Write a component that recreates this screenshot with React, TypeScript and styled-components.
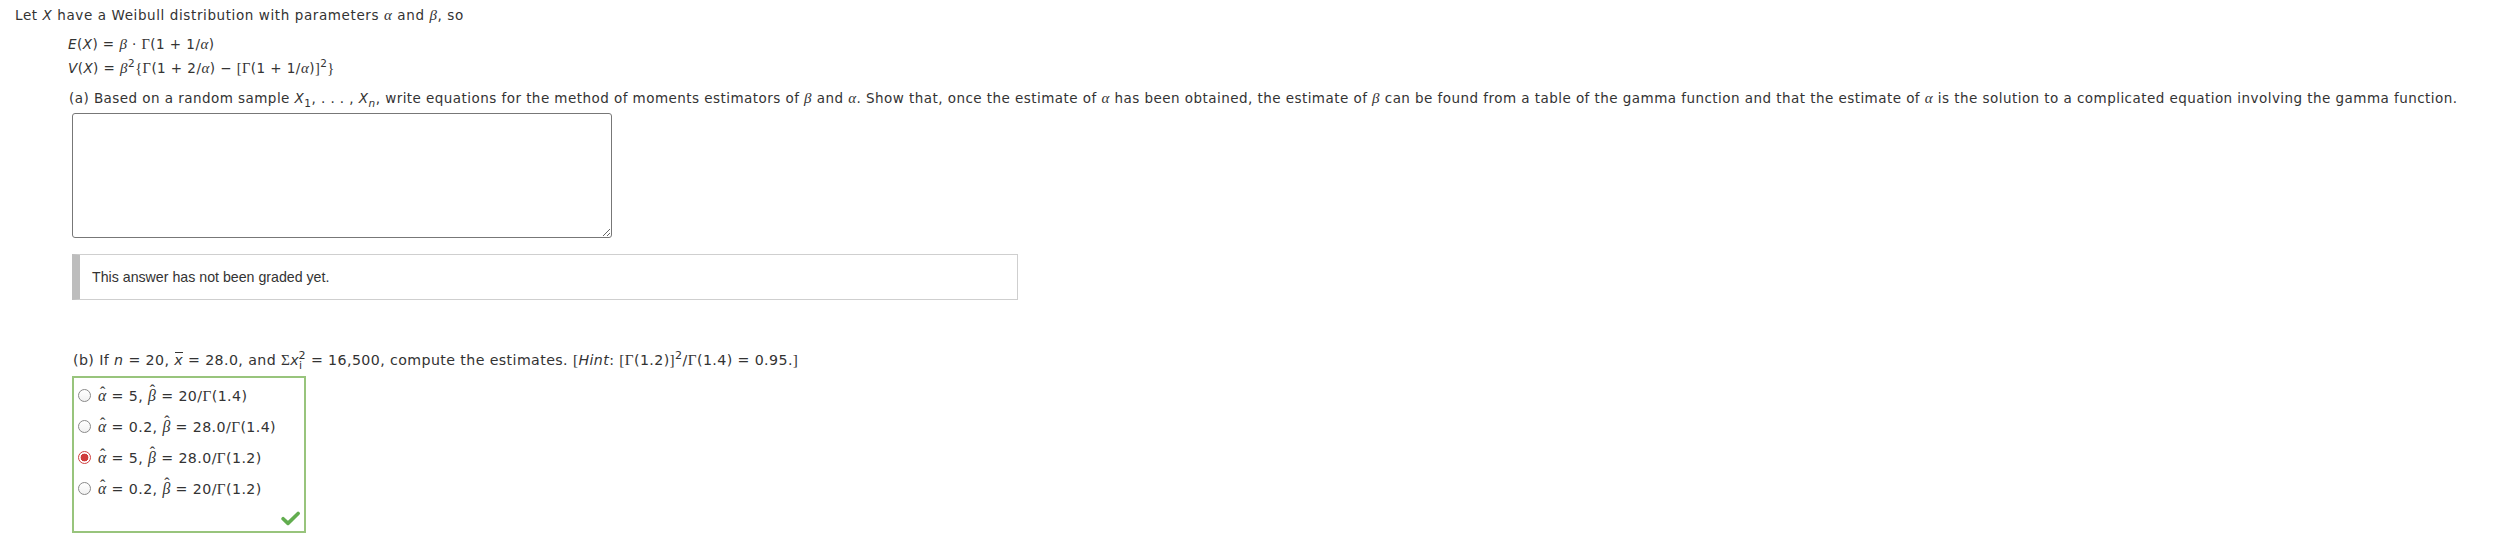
import React from 'react';
import styled, { createGlobalStyle } from 'styled-components';

const GlobalStyle = createGlobalStyle`
  html, body {
    margin: 0;
    padding: 0;
    background: #fff;
  }
  body {
    font-family: "DejaVu Sans", Verdana, sans-serif;
    font-size: 13.5px;
    letter-spacing: 0.45px;
    color: #333;
  }
`;

const Page = styled.div`
  padding: 5px 0 40px 15px;
  white-space: nowrap;
`;

const Intro = styled.div`
  line-height: 20px;
  letter-spacing: 0.6px;
`;

const Formulas = styled.div`
  margin: 7px 0 0 53px;
  line-height: 24px;
`;

const PartText = styled.div<{ $top: number; $indent: number }>`
  margin-top: ${p => p.$top}px;
  margin-left: ${p => p.$indent}px;
  line-height: 20px;
`;

const PartB = styled.div`
  font-size: 14.2px;
  letter-spacing: 0.4px;
`;

const Var = styled.i`
  font-style: italic;
`;

const Sym = styled.span`
  font-family: "Liberation Serif", "Times New Roman", serif;
  font-size: 1.074em;
  line-height: 1;
`;

const Greek = styled(Sym)`
  font-size: 1.111em;
  font-style: italic;
`;

const Sub = styled.span`
  position: relative;
  top: 4px;
  font-size: 0.78em;
  line-height: 0;
`;

const Sup = styled.span`
  position: relative;
  top: -6px;
  font-size: 0.78em;
  line-height: 0;
`;

const StackedSub = styled(Sub)`
  margin-right: -4px;
`;

const Bar = styled.span`
  position: relative;
  display: inline-block;
  &::before {
    content: '';
    position: absolute;
    left: 1px;
    right: 0;
    top: 2px;
    border-top: 1px solid #333;
  }
`;

const Hat = styled.span<{ $top: number }>`
  position: relative;
  display: inline-block;
  line-height: 1;
  &::after {
    content: 'ˆ';
    position: absolute;
    left: 1px;
    right: 0;
    top: ${p => p.$top}px;
    text-align: center;
    font-family: "Liberation Serif", "Times New Roman", serif;
    font-style: normal;
    font-size: 16px;
    line-height: 1;
  }
`;

const AnswerBox = styled.textarea`
  display: block;
  box-sizing: border-box;
  margin: 5px 0 0 57px;
  width: 540px;
  height: 125px;
  border: 1px solid #777;
  border-radius: 3px;
  padding: 4px;
  font-family: "DejaVu Sans", Verdana, sans-serif;
  font-size: 13px;
  background: #fff;
  resize: both;
  outline: none;
`;

const GradeNote = styled.div`
  box-sizing: border-box;
  margin: 16px 0 0 57px;
  width: 946px;
  height: 46px;
  border: 1px solid #cfcfcf;
  border-left: 8px solid #bdbdbd;
  display: flex;
  align-items: center;
  padding-left: 12px;
  font-family: "Liberation Sans", Arial, sans-serif;
  font-size: 14.2px;
  letter-spacing: 0;
  color: #333;
`;

const Choices = styled.div`
  box-sizing: border-box;
  margin: 6px 0 0 57px;
  width: 234px;
  height: 157px;
  border: 2px solid #98c47c;
  padding: 2px 0 0 3px;
  display: flex;
  flex-direction: column;
`;

const Choice = styled.label`
  display: flex;
  align-items: center;
  gap: 7px;
  height: 31px;
`;

const Radio = styled.span<{ $checked?: boolean }>`
  box-sizing: border-box;
  flex: none;
  width: 13px;
  height: 13px;
  border-radius: 50%;
  border: 1px solid ${p => (p.$checked ? '#d04040' : '#8a8a8a')};
  background: ${p =>
    p.$checked
      ? 'radial-gradient(circle, #d03c3c 0 3.6px, #fff 4.2px)'
      : 'linear-gradient(#fff, #f1f1f1)'};
  margin-left: 1px;
`;

const CheckRow = styled.div`
  flex: 1;
  display: flex;
  justify-content: flex-end;
  align-items: flex-end;
  padding: 0 4px 5px 0;
`;

const alphaHat = (
  <Hat $top={-3}>
    <Greek>α</Greek>
  </Hat>
);

const betaHat = (
  <Hat $top={-5}>
    <Greek>β</Greek>
  </Hat>
);

const G = <Sym>Γ</Sym>;

const options = [
  { a: '5', b: '20', g: '1.4' },
  { a: '0.2', b: '28.0', g: '1.4' },
  { a: '5', b: '28.0', g: '1.2', checked: true },
  { a: '0.2', b: '20', g: '1.2' },
];

const App: React.FC = () => {
  return (
    <Page>
      <GlobalStyle />
      <Intro>
        Let <Var>X</Var> have a Weibull distribution with parameters <Greek>α</Greek> and{' '}
        <Greek>β</Greek>, so
      </Intro>
      <Formulas>
        <div>
          <Var>E</Var>(<Var>X</Var>) = <Greek>β</Greek> · {G}(1 + 1/<Greek>α</Greek>)
        </div>
        <div>
          <Var>V</Var>(<Var>X</Var>) = <Greek>β</Greek>
          <Sup>2</Sup>
          <Sym>{'{'}</Sym>
          {G}(1 + 2/<Greek>α</Greek>) − <Sym>[</Sym>
          {G}(1 + 1/<Greek>α</Greek>)<Sym>]</Sym>
          <Sup>2</Sup>
          <Sym>{'}'}</Sym>
        </div>
      </Formulas>
      <PartText $top={8} $indent={54}>
        (a) Based on a random sample <Var>X</Var>
        <Sub>1</Sub>, . . . , <Var>X</Var>
        <Sub>
          <Var>n</Var>
        </Sub>
        , write equations for the method of moments estimators of <Greek>β</Greek> and{' '}
        <Greek>α</Greek>. Show that, once the estimate of <Greek>α</Greek> has been obtained, the
        estimate of <Greek>β</Greek> can be found from a table of the gamma function and that the
        estimate of <Greek>α</Greek> is the solution to a complicated equation involving the gamma
        function.
      </PartText>
      <AnswerBox />
      <GradeNote>This answer has not been graded yet.</GradeNote>
      <PartB>
        <PartText $top={50} $indent={58}>
          (b) If <Var>n</Var> = 20, <Bar>
            <Var>x</Var>
          </Bar>{' '}
          = 28.0, and <Sym>Σ</Sym>
          <Var>x</Var>
          <StackedSub>i</StackedSub>
          <Sup>2</Sup> = 16,500, compute the estimates. <Sym>[</Sym>
          <Var>Hint</Var>: <Sym>[</Sym>
          {G}(1.2)<Sym>]</Sym>
          <Sup>2</Sup>/{G}(1.4) = 0.95.<Sym>]</Sym>
        </PartText>
        <Choices>
          {options.map(o => (
            <Choice key={o.a + o.b + o.g}>
              <Radio $checked={o.checked} />
              <span>
                {alphaHat} = {o.a}, {betaHat} = {o.b}/{G}({o.g})
              </span>
            </Choice>
          ))}
          <CheckRow>
            <svg width="19" height="15" viewBox="0 0 18 14">
              <path
                d="M2 7.2 L6.6 11.6 L16.2 2.2"
                fill="none"
                stroke="#62ad4f"
                strokeWidth="3.4"
                strokeLinecap="round"
                strokeLinejoin="round"
              />
            </svg>
          </CheckRow>
        </Choices>
      </PartB>
    </Page>
  );
};

export default App;
